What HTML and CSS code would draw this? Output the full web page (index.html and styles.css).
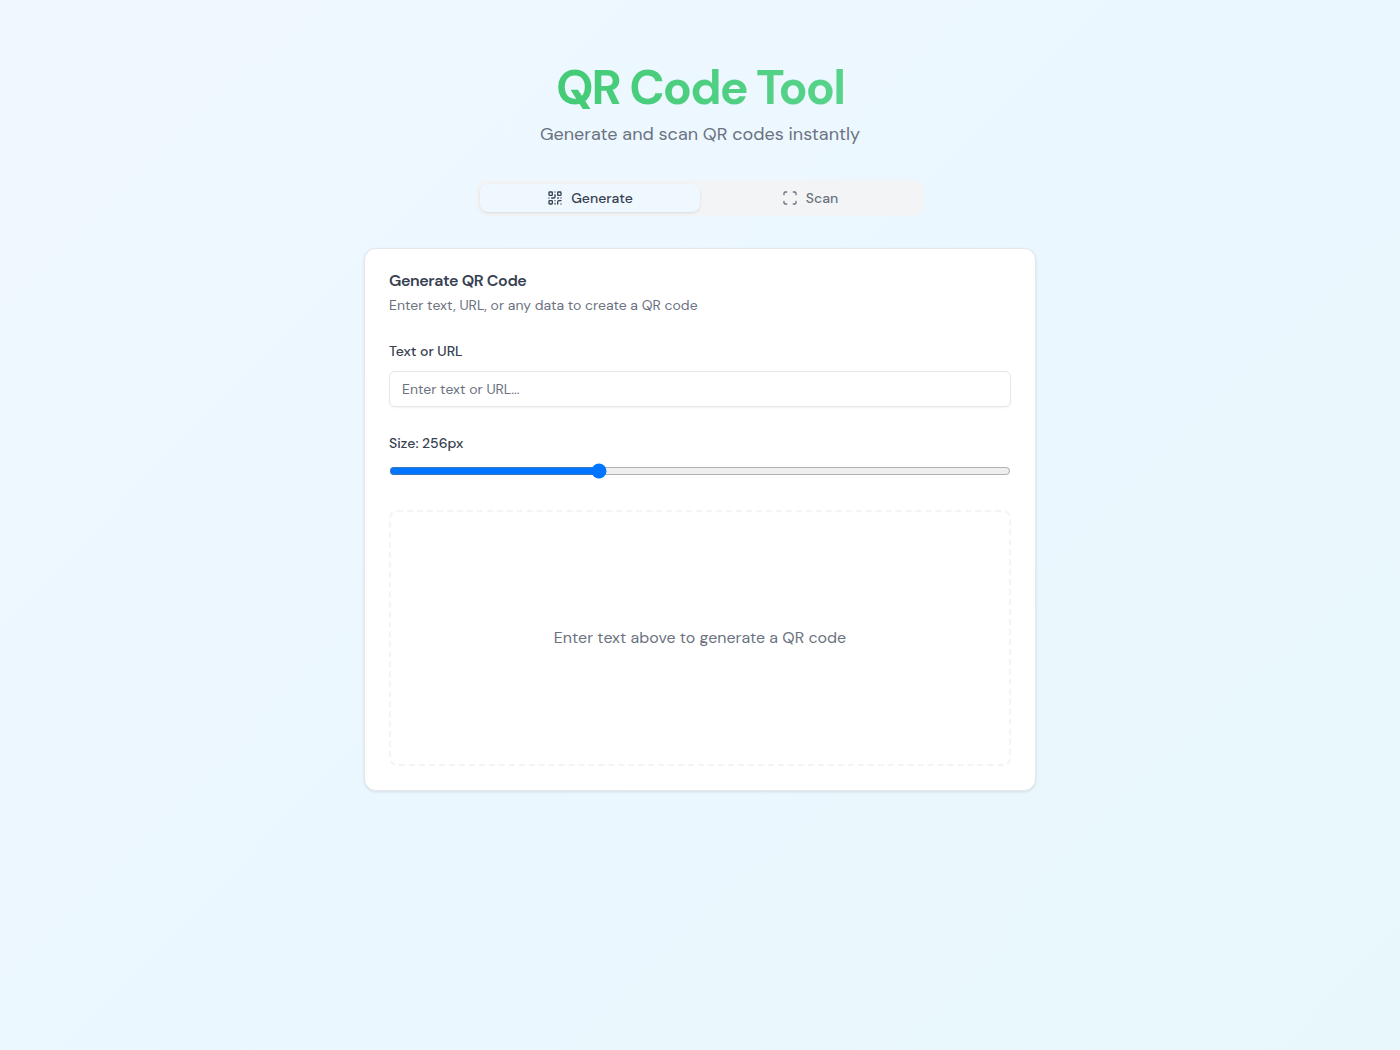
FILE: index.html
```html
<!DOCTYPE html>
<html lang="en">
<head>
  <meta charset="UTF-8" />
  <meta name="viewport" content="width=device-width, initial-scale=1.0" />
  <title>QR Code Tool</title>
  <link rel="stylesheet" href="styles.css">
</head>
<body>

<main class="container">
  <header class="header">
    <h1>QR Code Tool</h1>
    <p>Generate and scan QR codes instantly</p>
  </header>

  <div class="tabs" role="tablist">
    <button class="tab active" type="button" role="tab" aria-selected="true">
      <svg class="icon" viewBox="0 0 24 24" aria-hidden="true">
        <rect width="5" height="5" x="3" y="3" rx="1" />
        <rect width="5" height="5" x="16" y="3" rx="1" />
        <rect width="5" height="5" x="3" y="16" rx="1" />
        <path d="M21 16h-3a2 2 0 0 0-2 2v3" />
        <path d="M21 21v.01" />
        <path d="M12 7v3a2 2 0 0 1-2 2H7" />
        <path d="M3 12h.01" />
        <path d="M12 3h.01" />
        <path d="M12 16v.01" />
        <path d="M16 12h1" />
        <path d="M21 12v.01" />
        <path d="M12 21v-1" />
      </svg>
      Generate
    </button>
    <button class="tab" type="button" role="tab" aria-selected="false">
      <svg class="icon" viewBox="0 0 24 24" aria-hidden="true">
        <path d="M3 7V5a2 2 0 0 1 2-2h2" />
        <path d="M17 3h2a2 2 0 0 1 2 2v2" />
        <path d="M21 17v2a2 2 0 0 1-2 2h-2" />
        <path d="M7 21H5a2 2 0 0 1-2-2v-2" />
      </svg>
      Scan
    </button>
  </div>

  <section class="card">
    <div class="card-header">
      <h2>Generate QR Code</h2>
      <p>Enter text, URL, or any data to create a QR code</p>
    </div>

    <div class="field">
      <label for="text">Text or URL</label>
      <input type="text" id="text" placeholder="Enter text or URL..." />
    </div>

    <div class="field">
      <label for="size">Size: <span id="sizeValue">256</span>px</label>
      <div class="slider">
        <input type="range" id="size" min="128" max="512" step="32" value="256" />
      </div>
    </div>

    <div class="preview">
      <p>Enter text above to generate a QR code</p>
    </div>
  </section>
</main>

<script>
  let size = document.getElementById('size');
  let sizeValue = document.getElementById('sizeValue');

  size.addEventListener('input', function () {
    sizeValue.textContent = size.value;
  });
</script>

</body>
</html>
```
FILE: styles.css
```css
* {
  box-sizing: border-box;
}
body {
  margin: 0;
  min-height: 100vh;
  font-family: "DM Sans", Inter, "Liberation Sans", sans-serif;
  font-size: 16px;
  line-height: 24px;
  color: #374151;
  background: linear-gradient(135deg, #f0f8ff 0%, #ebf7ff 50%, #e8f8fa 100%);
}
h1, h2, p {
  margin: 0;
}
.container {
  max-width: 704px;
  margin: 0 auto;
  padding: 64px 16px;
}
.header {
  text-align: center;
  margin-bottom: 32px;
}
.header h1 {
  width: fit-content;
  margin: 0 auto 8px;
  font-size: 48px;
  line-height: 48px;
  font-weight: 700;
  letter-spacing: -0.04em;
  color: transparent;
  background: linear-gradient(to right, #44cb77, #58d38a);
  -webkit-background-clip: text;
  background-clip: text;
}
.header p {
  font-size: 18px;
  line-height: 28px;
  color: #6b7280;
}
.tabs {
  display: grid;
  grid-template-columns: 1fr 1fr;
  max-width: 448px;
  height: 36px;
  margin: 0 auto 32px;
  padding: 4px;
  border-radius: 12px;
  background: #f3f4f6;
}
.tab {
  display: flex;
  align-items: center;
  justify-content: center;
  gap: 8px;
  padding: 0 8px;
  border: none;
  border-radius: 8px;
  background: transparent;
  font-family: inherit;
  font-size: 14px;
  font-weight: 500;
  line-height: 20px;
  color: #6b7280;
  cursor: pointer;
}
.tab.active {
  background: #f0f8ff;
  color: #374151;
  box-shadow: 0 1px 3px rgba(0, 0, 0, 0.1);
}
.icon {
  width: 16px;
  height: 16px;
  fill: none;
  stroke: currentColor;
  stroke-width: 2;
  stroke-linecap: round;
  stroke-linejoin: round;
}
.card {
  display: flex;
  flex-direction: column;
  gap: 24px;
  padding: 24px;
  border: 1px solid #e5e7eb;
  border-radius: 12px;
  background: #fff;
  box-shadow: 0 1px 3px rgba(0, 0, 0, 0.1);
}
.card-header h2 {
  margin-bottom: 6px;
  font-size: 16px;
  line-height: 16px;
  font-weight: 600;
  letter-spacing: -0.025em;
}
.card-header p {
  font-size: 14px;
  line-height: 20px;
  color: #6b7280;
}
.field {
  display: flex;
  flex-direction: column;
  gap: 8px;
}
.field label {
  font-size: 14px;
  font-weight: 500;
}
.field input[type="text"] {
  width: 100%;
  height: 36px;
  padding: 4px 12px;
  border: 1px solid #e5e7eb;
  border-radius: 6px;
  background: transparent;
  font-family: inherit;
  font-size: 14px;
  color: inherit;
  box-shadow: 0 1px 2px rgba(0, 0, 0, 0.05);
}
.field input[type="text"]::placeholder {
  color: #6b7280;
}
.slider {
  height: 23px;
}
.slider input {
  display: block;
  width: 100%;
  height: 16px;
  margin: 0;
}
.preview {
  display: flex;
  align-items: center;
  justify-content: center;
  min-height: 256px;
  border: 2px dashed #f3f4f6;
  border-radius: 8px;
  color: #6b7280;
}
```
